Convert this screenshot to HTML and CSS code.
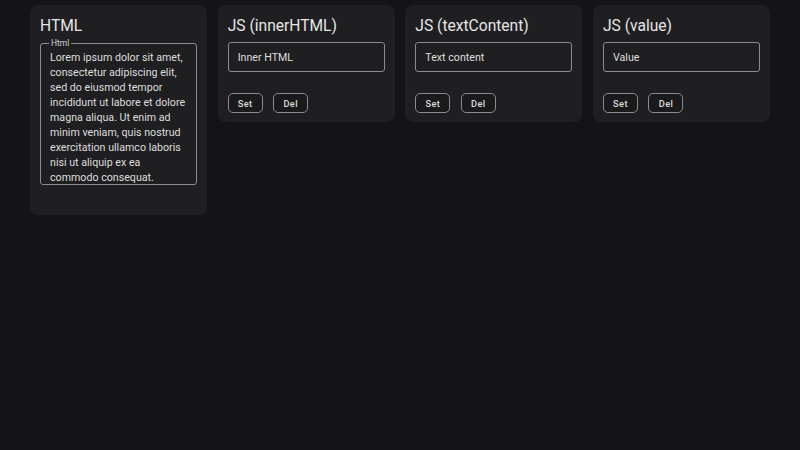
FILE: index.html
```html
<!DOCTYPE html>
<html>
<head>
<meta charset="utf-8">
<link rel="stylesheet" href="styles.css">
</head>
<body>
<div class="grid">
  <div class="card">
    <h2 class="title">HTML</h2>
    <fieldset class="area">
      <legend class="legend">Html</legend>
      <div class="area-text">Lorem ipsum dolor sit amet, consectetur adipiscing elit, sed do eiusmod tempor incididunt ut labore et dolore magna aliqua. Ut enim ad minim veniam, quis nostrud exercitation ullamco laboris nisi ut aliquip ex ea commodo consequat.</div>
    </fieldset>
  </div>
  <div class="card">
    <h2 class="title">JS (innerHTML)</h2>
    <div class="field">Inner HTML</div>
    <div class="actions"><button class="btn">Set</button><button class="btn">Del</button></div>
  </div>
  <div class="card">
    <h2 class="title">JS (textContent)</h2>
    <div class="field">Text content</div>
    <div class="actions"><button class="btn">Set</button><button class="btn">Del</button></div>
  </div>
  <div class="card">
    <h2 class="title">JS (value)</h2>
    <div class="field">Value</div>
    <div class="actions"><button class="btn">Set</button><button class="btn">Del</button></div>
  </div>
</div>
</body>
</html>
```
FILE: styles.css
```css
html, body {
  margin: 0;
  padding: 0;
  background: #141416;
  color: #e3e3e3;
  font-family: Roboto, "Liberation Sans", sans-serif;
}
.grid {
  display: flex;
  align-items: flex-start;
  gap: 10.67px;
  padding: 5px 30px;
}
.card {
  width: 177px;
  box-sizing: border-box;
  background: #1f1f21;
  border-radius: 8px;
  padding: 10px 10px 9px;
}
.title {
  margin: 0;
  font-size: 15.6px;
  font-weight: 400;
  line-height: 22px;
  color: #e6e6e6;
  height: 22px;
}
.area {
  margin: 2px 0 21px;
  padding: 0 7px 0 9px;
  border: 1px solid #8b8b8d;
  border-radius: 3px;
  height: 146px;
  box-sizing: border-box;
  min-width: 0;
}
.legend {
  font-size: 8.5px;
  padding: 0 2px;
  margin-left: -1px;
  line-height: 8px;
  color: #d0d0d0;
}
.area-text {
  font-size: 10.67px;
  line-height: 15px;
  color: #dedede;
  height: 133px;
  overflow: hidden;
  margin-top: 3px;
}
.field {
  margin-top: 5px;
  height: 30px;
  box-sizing: border-box;
  border: 1px solid #8b8b8d;
  border-radius: 3px;
  padding: 1px 9px 0;
  font-size: 10.67px;
  line-height: 28px;
  color: #dedede;
}
.actions {
  display: flex;
  gap: 10.5px;
  margin-top: 21px;
}
.btn {
  width: 35px;
  height: 20px;
  box-sizing: border-box;
  border: 1px solid #8b8b8d;
  border-radius: 5px;
  background: #1a1a1c;
  color: #dcdcdc;
  font-family: Roboto, "Liberation Sans", sans-serif;
  font-size: 9.2px;
  font-weight: 500;
  letter-spacing: 0.4px;
  padding: 0;
}
```
